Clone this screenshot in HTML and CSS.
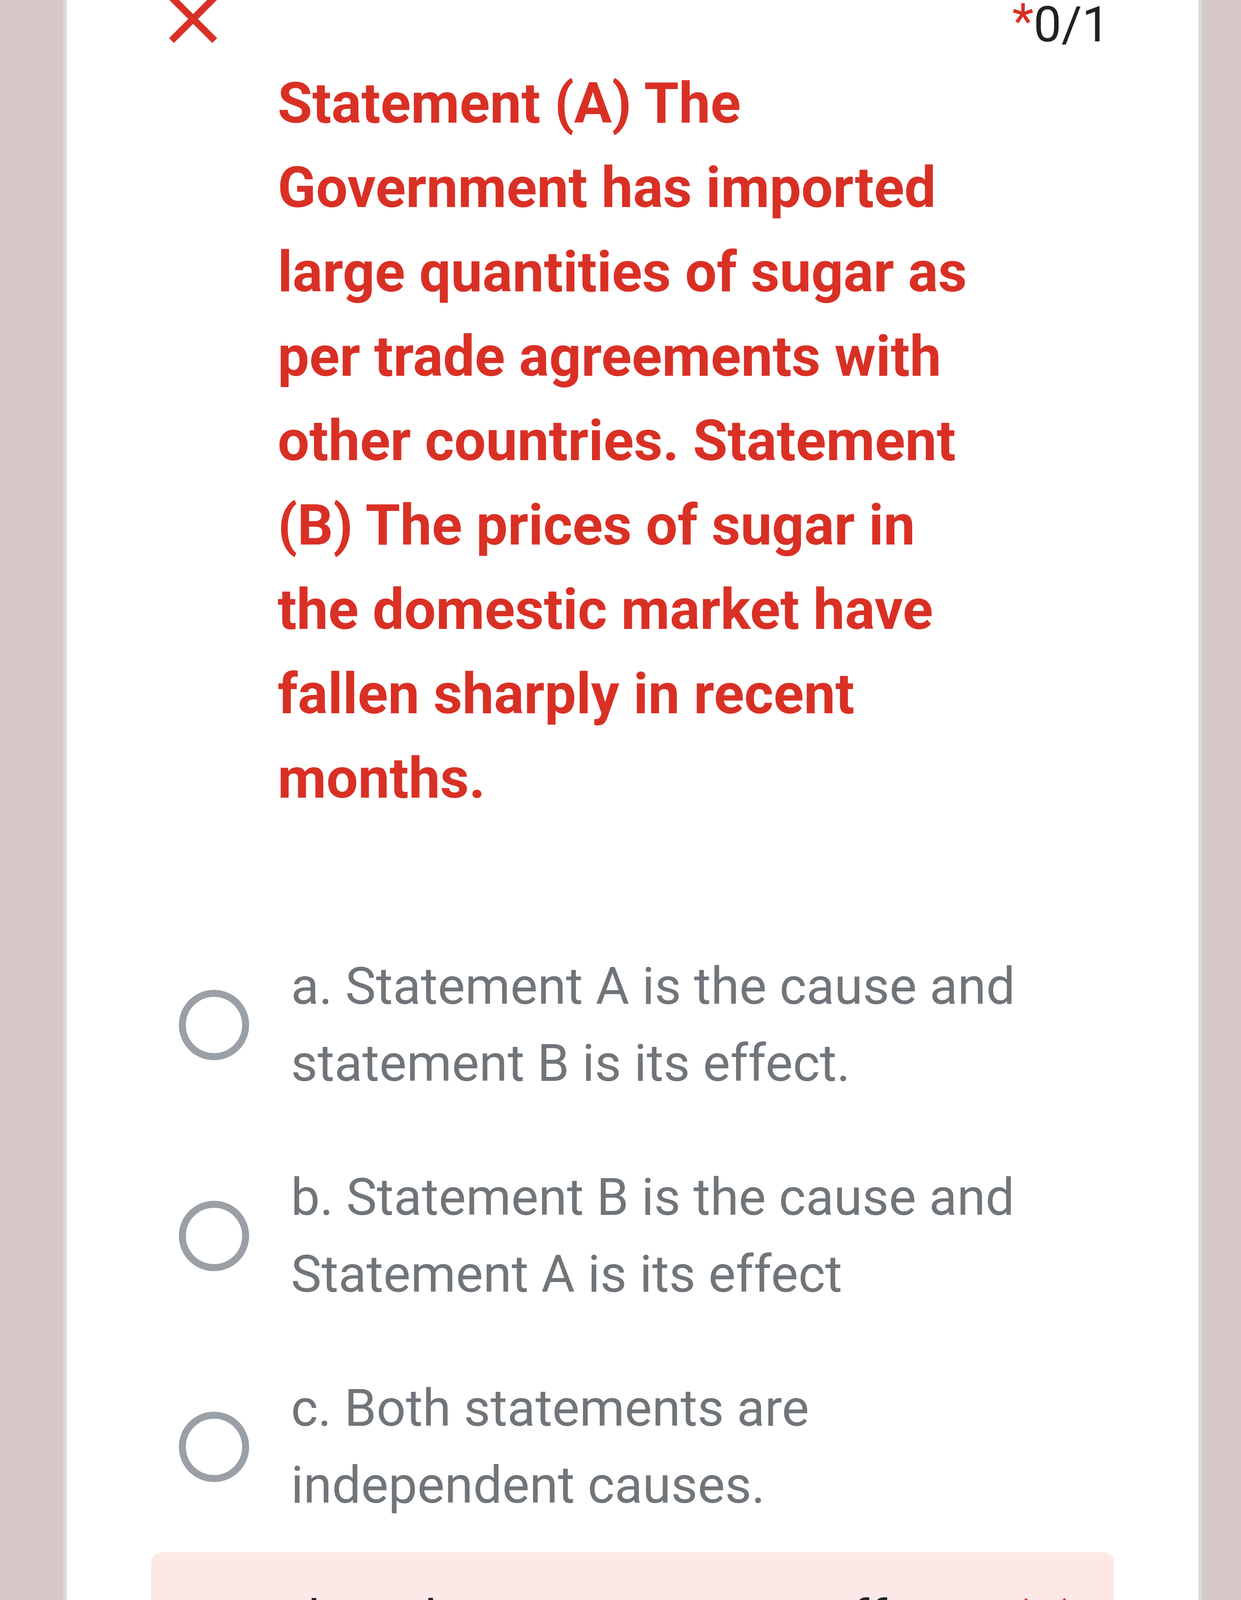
FILE: index.html
```html
<!DOCTYPE html>
<html lang="en">
<head>
    <meta charset="UTF-8">
    <meta name="viewport" content="width=device-width, initial-scale=1.0">
    <title>Quiz result</title>
    <link rel="stylesheet" href="styles.css">
</head>
<body>
    <main class="page">
        <section class="question-card">
            <div class="question-top">
                <svg class="mark-icon" viewBox="0 0 24 24" aria-label="Incorrect">
                    <path d="M19 6.41L17.59 5 12 10.59 6.41 5 5 6.41 10.59 12 5 17.59 6.41 19 12 13.41 17.59 19 19 17.59 13.41 12z"/>
                </svg>
                <div class="score"><span class="required">*</span>0/1</div>
            </div>

            <h2 class="question-title">Statement (A) The Government has imported large quantities of sugar as per trade agreements with other countries. Statement (B) The prices of sugar in the domestic market have fallen sharply in recent months.</h2>

            <ul class="options">
                <li class="option">
                    <span class="radio"></span>
                    <span class="option-text">a. Statement A is the cause and statement B is its effect.</span>
                </li>
                <li class="option">
                    <span class="radio"></span>
                    <span class="option-text">b. Statement B is the cause and Statement A is its effect</span>
                </li>
                <li class="option">
                    <span class="radio"></span>
                    <span class="option-text">c. Both statements are independent causes.</span>
                </li>
                <li class="option option-wrong">
                    <span class="radio radio-checked"></span>
                    <span class="option-text">d. Both statements are effects of independent causes.</span>
                    <svg class="mark-icon" viewBox="0 0 24 24" aria-label="Incorrect">
                        <path d="M19 6.41L17.59 5 12 10.59 6.41 5 5 6.41 10.59 12 5 17.59 6.41 19 12 13.41 17.59 19 19 17.59 13.41 12z"/>
                    </svg>
                </li>
            </ul>
        </section>
    </main>
</body>
</html>
```

FILE: styles.css
```css
html {
    scrollbar-width: none;
}

body {
    margin: 0;
    padding: 0;
    font-family: Roboto, 'Noto Sans', Arial, sans-serif;
    background-color: #d6c8c8;
}

.page {
    height: 4466px;
    overflow: hidden;
    padding: 0 100px 0 162px;
}

.question-card {
    background-color: #fff;
    border-left: 9px solid #dadce0;
    border-right: 9px solid #dadce0;
    height: 100%;
    padding: 0 216px;
}

.question-top {
    display: flex;
    justify-content: space-between;
    align-items: flex-start;
    height: 157px;
}

.mark-icon {
    width: 211px;
    height: 211px;
    flex-shrink: 0;
    fill: #d93025;
}

.question-top .mark-icon {
    margin-top: -57px;
    margin-left: 2px;
}

.score {
    margin: -9px 11px 0 0;
    font-size: 127px;
    line-height: 1;
    color: #202124;
}

.required {
    color: #d93025;
    vertical-align: 8px;
}

.question-title {
    margin: 0 0 0 324px;
    width: 1830px;
    font-size: 144px;
    font-weight: 700;
    line-height: 216px;
    color: #d93025;
}

.options {
    list-style: none;
    margin: 253px 0 0;
    padding: 0;
}

.option {
    display: flex;
    align-items: center;
    padding: 73px 71px;
    font-size: 132px;
    line-height: 197px;
    color: #70757a;
}

.option-text {
    flex: 1;
    margin-left: 107px;
}

.radio {
    width: 180px;
    height: 180px;
    border: 18px solid #9aa0a6;
    border-radius: 50%;
    box-sizing: border-box;
    flex-shrink: 0;
    display: flex;
    align-items: center;
    justify-content: center;
}

.radio-checked {
    border-color: #5f6368;
}

.radio-checked::after {
    content: '';
    width: 90px;
    height: 90px;
    border-radius: 50%;
    background-color: #5f6368;
}

.option-wrong {
    background-color: #fce8e6;
    border-radius: 27px;
    color: #202124;
}

.option-wrong .mark-icon {
    align-self: flex-start;
}
```
